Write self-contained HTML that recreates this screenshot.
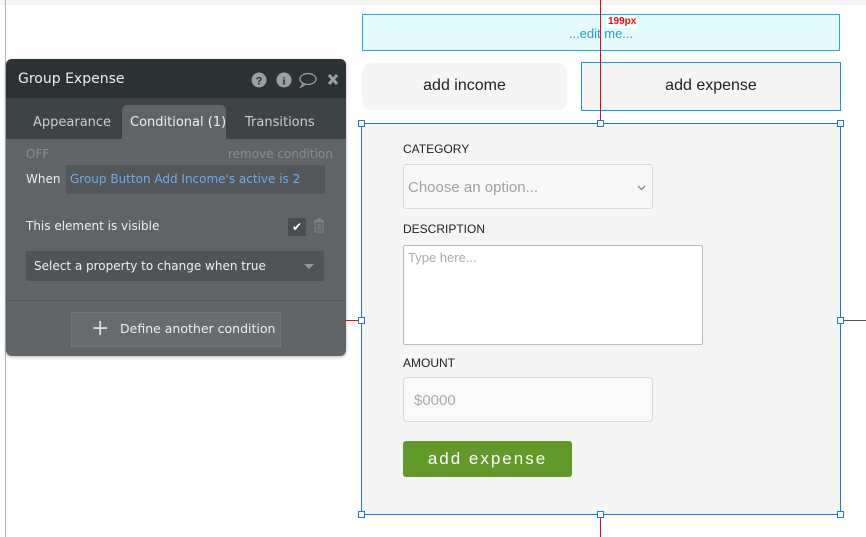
<!DOCTYPE html>
<html><head><style>
*{box-sizing:border-box;margin:0;padding:0}
body{width:866px;height:537px;background:#fff;position:relative;overflow:hidden;font-family:"Liberation Sans",sans-serif}
.a{position:absolute;white-space:nowrap}
.p{font-family:"DejaVu Sans","Liberation Sans",sans-serif}
</style></head><body>
<div class="a" style="left:0;top:0;width:866px;height:5px;background:#f5f5f5"></div>
<div class="a" style="left:5px;top:0;width:1px;height:537px;background:#a9b4c2"></div>

<div class="a" style="left:362px;top:14px;width:478px;height:37px;background:#e6fbfd;border:1px solid #1fb0c4;color:#1fa5bd;font-size:13px;text-align:center;line-height:37px">...edit me...</div>
<div class="a" style="left:362px;top:63px;width:205px;height:47px;background:#f5f5f5;border-radius:10px;font-size:16px;color:#222;text-align:center;line-height:45px">add income</div>
<div class="a" style="left:581px;top:62px;width:260px;height:49px;background:#f5f5f5;border:1px solid #1a97c9;font-size:16px;color:#222;text-align:center;line-height:45px">add expense</div>

<div class="a" style="left:361px;top:123px;width:480px;height:392px;background:#f5f5f5;border:1px solid #1f74e6"></div>
<div class="a" style="left:600px;top:0;width:1px;height:123px;background:#e01010"></div>
<div class="a" style="left:600px;top:515px;width:1px;height:22px;background:#e01010"></div>
<div class="a" style="left:346px;top:320px;width:15px;height:1px;background:#e01010"></div>
<div class="a" style="left:841px;top:320px;width:25px;height:1px;background:#555"></div>
<div class="a" style="left:606px;top:16px;font-size:10px;font-weight:bold;color:#e01010;background:#fff;padding:0 2px;line-height:12px">199px</div>
<div class="a" style="left:358px;top:120px;width:7px;height:7px;border:1px solid #1f74e6;background:#fff"></div>
<div class="a" style="left:597px;top:120px;width:7px;height:7px;border:1px solid #1f74e6;background:#fff"></div>
<div class="a" style="left:837px;top:120px;width:7px;height:7px;border:1px solid #1f74e6;background:#fff"></div>
<div class="a" style="left:358px;top:317px;width:7px;height:7px;border:1px solid #1f74e6;background:#fff"></div>
<div class="a" style="left:837px;top:317px;width:7px;height:7px;border:1px solid #1f74e6;background:#fff"></div>
<div class="a" style="left:358px;top:511px;width:7px;height:7px;border:1px solid #1f74e6;background:#fff"></div>
<div class="a" style="left:597px;top:511px;width:7px;height:7px;border:1px solid #1f74e6;background:#fff"></div>
<div class="a" style="left:837px;top:511px;width:7px;height:7px;border:1px solid #1f74e6;background:#fff"></div>

<div class="a" style="left:403px;top:142px;font-size:12px;color:#222">CATEGORY</div>
<div class="a" style="left:403px;top:164px;width:250px;height:45px;background:#f8f8f8;border:1px solid #d9d9d9;border-radius:3px;color:#a0a0a0;font-size:15px;line-height:45px;padding-left:4px">Choose an option...<svg class="a" style="right:6px;top:20px" width="9" height="6"><path d="M1 1L4.5 4.5L8 1" fill="none" stroke="#777" stroke-width="1.2"/></svg></div>
<div class="a" style="left:403px;top:222px;font-size:12px;color:#222">DESCRIPTION</div>
<div class="a" style="left:403px;top:245px;width:300px;height:100px;background:#fff;border:1px solid #bbb;border-radius:2px;color:#aaa;font-size:13px;padding:4px 4px">Type here...</div>
<div class="a" style="left:403px;top:356px;font-size:12px;color:#222">AMOUNT</div>
<div class="a" style="left:403px;top:377px;width:250px;height:45px;background:#fafafa;border:1px solid #d9d9d9;border-radius:4px;color:#aaa;font-size:15px;line-height:45px;padding-left:10px">$0000</div>
<div class="a" style="left:403px;top:441px;width:169px;height:36px;background:#629a29;border-radius:3px;color:#fff;font-size:17px;letter-spacing:2px;text-align:center;line-height:36px">add expense</div>

<div class="a p" style="left:6px;top:59px;width:340px;height:297px;background:#606467;border-radius:6px;overflow:hidden;box-shadow:0 1px 3px rgba(0,0,0,.3)">
  <div class="a" style="left:0;top:0;width:340px;height:39px;background:#2c3134"></div>
  <div class="a" style="left:12px;top:12px;font-size:14px;color:#eee">Group Expense</div>
  <svg class="a" style="left:245px;top:13px" width="90" height="16" viewBox="0 0 90 16">
    <circle cx="8" cy="8" r="7.5" fill="#9aa0a4"/><text x="8" y="12.5" font-size="11" font-weight="bold" text-anchor="middle" fill="#2c3134" font-family="Liberation Sans">?</text>
    <circle cx="33" cy="8" r="7.5" fill="#9aa0a4"/><text x="33" y="12.5" font-size="11" font-weight="bold" text-anchor="middle" fill="#2c3134" font-family="Liberation Serif">i</text>
    <ellipse cx="57" cy="7" rx="8" ry="5.5" fill="none" stroke="#9aa0a4" stroke-width="1.3"/><path d="M52 11 L50 15 L55 12" fill="none" stroke="#9aa0a4" stroke-width="1.3"/>
    <path d="M78 3 L86 12 M86 3 L78 12" stroke="#9aa0a4" stroke-width="3"/>
  </svg>
  <div class="a" style="left:0;top:39px;width:340px;height:41px;background:#3e4346"></div>
  <div class="a" style="left:116px;top:46px;width:104px;height:34px;background:#606467;border-radius:5px 5px 0 0"></div>
  <div class="a" style="left:27px;top:56px;font-size:13px;color:#ccc">Appearance</div>
  <div class="a" style="left:124px;top:56px;font-size:13px;color:#eee">Conditional (1)</div>
  <div class="a" style="left:239px;top:56px;font-size:13px;color:#ccc">Transitions</div>
  <div class="a" style="left:20px;top:88px;font-size:12px;color:#8a8e91">OFF</div>
  <div class="a" style="left:222px;top:88px;font-size:12px;color:#8a8e91">remove condition</div>
  <div class="a" style="left:20px;top:113px;font-size:12px;color:#eee">When</div>
  <div class="a" style="left:60px;top:106px;width:259px;height:29px;background:#53575a;color:#6aaef0;font-size:12px;line-height:29px;padding-left:4px">Group Button Add Income's active is 2</div>
  <div class="a" style="left:20px;top:160px;font-size:12px;color:#eee">This element is visible</div>
  <div class="a" style="left:282px;top:159px;width:18px;height:18px;background:#4a4e51;color:#fff;font-size:12px;text-align:center;line-height:18px">&#10004;</div>
  <svg class="a" style="left:307px;top:159px" width="12" height="15"><rect x="1" y="2" width="10" height="1.5" fill="#7f8386"/><rect x="4" y="0" width="4" height="2" fill="#7f8386"/><rect x="2" y="4" width="8" height="10" fill="none" stroke="#7f8386"/><path d="M5 6V12M7 6V12" stroke="#7f8386"/></svg>
  <div class="a" style="left:20px;top:192px;width:298px;height:30px;background:#505457;color:#eee;font-size:12px;line-height:30px;padding-left:8px">Select a property to change when true<span class="a" style="right:10px;top:13px;width:0;height:0;border-left:5px solid transparent;border-right:5px solid transparent;border-top:5px solid #999"></span></div>
  <div class="a" style="left:0;top:241px;width:340px;height:1px;background:#55595c"></div>
  <div class="a" style="left:65px;top:253px;width:210px;height:35px;background:#686c6f;border:1px solid #737779"></div>
  <div class="a" style="left:85px;top:255px;font-size:22px;color:#ddd;line-height:30px">+</div>
  <div class="a" style="left:114px;top:262px;font-size:12.5px;color:#eee;line-height:16px">Define another condition</div>
</div>
</body></html>
